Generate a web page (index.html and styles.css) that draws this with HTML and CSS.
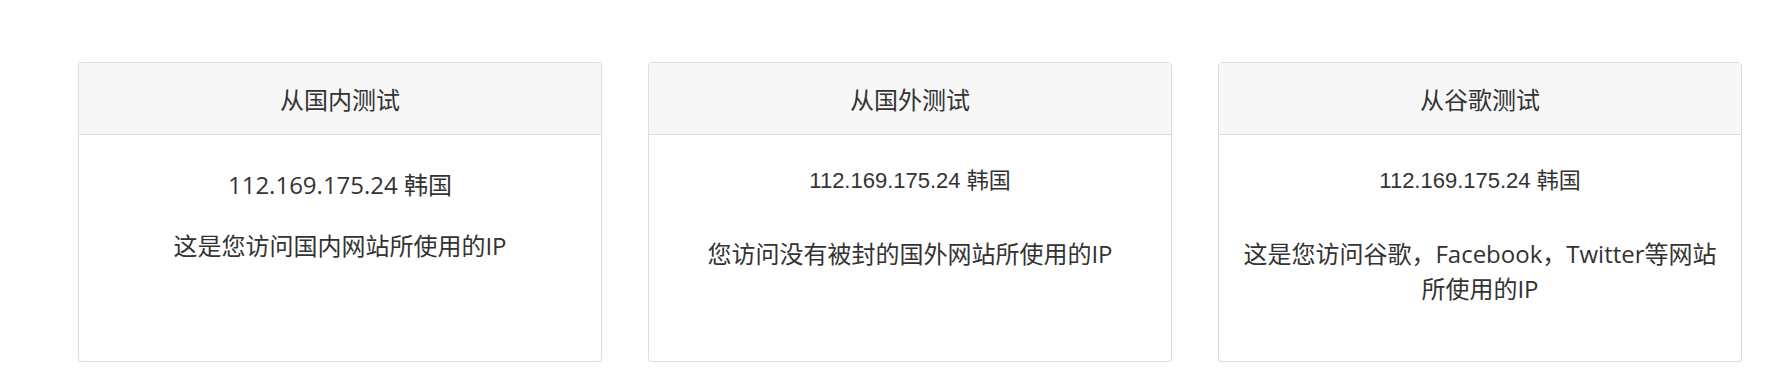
FILE: index.html
```
<!DOCTYPE html>
<html lang="zh-CN">
<head>
<meta charset="utf-8">
<title>IP 测试</title>
<link rel="stylesheet" href="styles.css">
</head>
<body>
<div class="row">
  <div class="card">
    <div class="card-head">从国内测试</div>
    <div class="card-body">
      <p class="ip ip-local">112.169.175.24 韩国</p>
      <p class="desc desc-local">这是您访问国内网站所使用的IP</p>
    </div>
  </div>
  <div class="card">
    <div class="card-head">从国外测试</div>
    <div class="card-body">
      <p class="ip ip-remote">112.169.175.24 韩国</p>
      <p class="desc">您访问没有被封的国外网站所使用的IP</p>
    </div>
  </div>
  <div class="card">
    <div class="card-head">从谷歌测试</div>
    <div class="card-body">
      <p class="ip ip-remote">112.169.175.24 韩国</p>
      <p class="desc">这是您访问谷歌，Facebook，Twitter等网站所使用的IP</p>
    </div>
  </div>
</div>
</body>
</html>
```
FILE: styles.css
```
html, body {
  margin: 0;
  padding: 0;
  background: #ffffff;
}
body {
  font-family: "Open Sans", "Noto Sans CJK SC", sans-serif;
  color: #333333;
}
.row {
  display: flex;
  gap: 46px;
  padding: 62px 0 0 78px;
}
.card {
  width: 524px;
  height: 300px;
  box-sizing: border-box;
  border: 1px solid #dddddd;
  border-radius: 4px;
  background: #ffffff;
  box-shadow: 0 1px 2px rgba(0, 0, 0, 0.06);
  overflow: hidden;
  display: flex;
  flex-direction: column;
}
.card-head {
  height: 72px;
  box-sizing: border-box;
  background: #f7f7f7;
  border-bottom: 1px solid #dddddd;
  display: flex;
  align-items: center;
  justify-content: center;
  font-size: 24px;
  line-height: 34px;
  padding-top: 2px;
}
.card-body {
  padding: 30px 15px 0;
  text-align: center;
}
.ip {
  margin: 0;
}
.ip-local {
  font-size: 24px;
  line-height: 34px;
  margin: 3px 0 27px;
}
.ip-remote {
  font-family: "Liberation Sans", "Noto Sans CJK SC", sans-serif;
  font-size: 22px;
  line-height: 31px;
  margin: 0 0 40px;
}
.desc {
  margin: 0;
  font-size: 24px;
  line-height: 35px;
}
.desc-local {
  line-height: 34px;
}
```
